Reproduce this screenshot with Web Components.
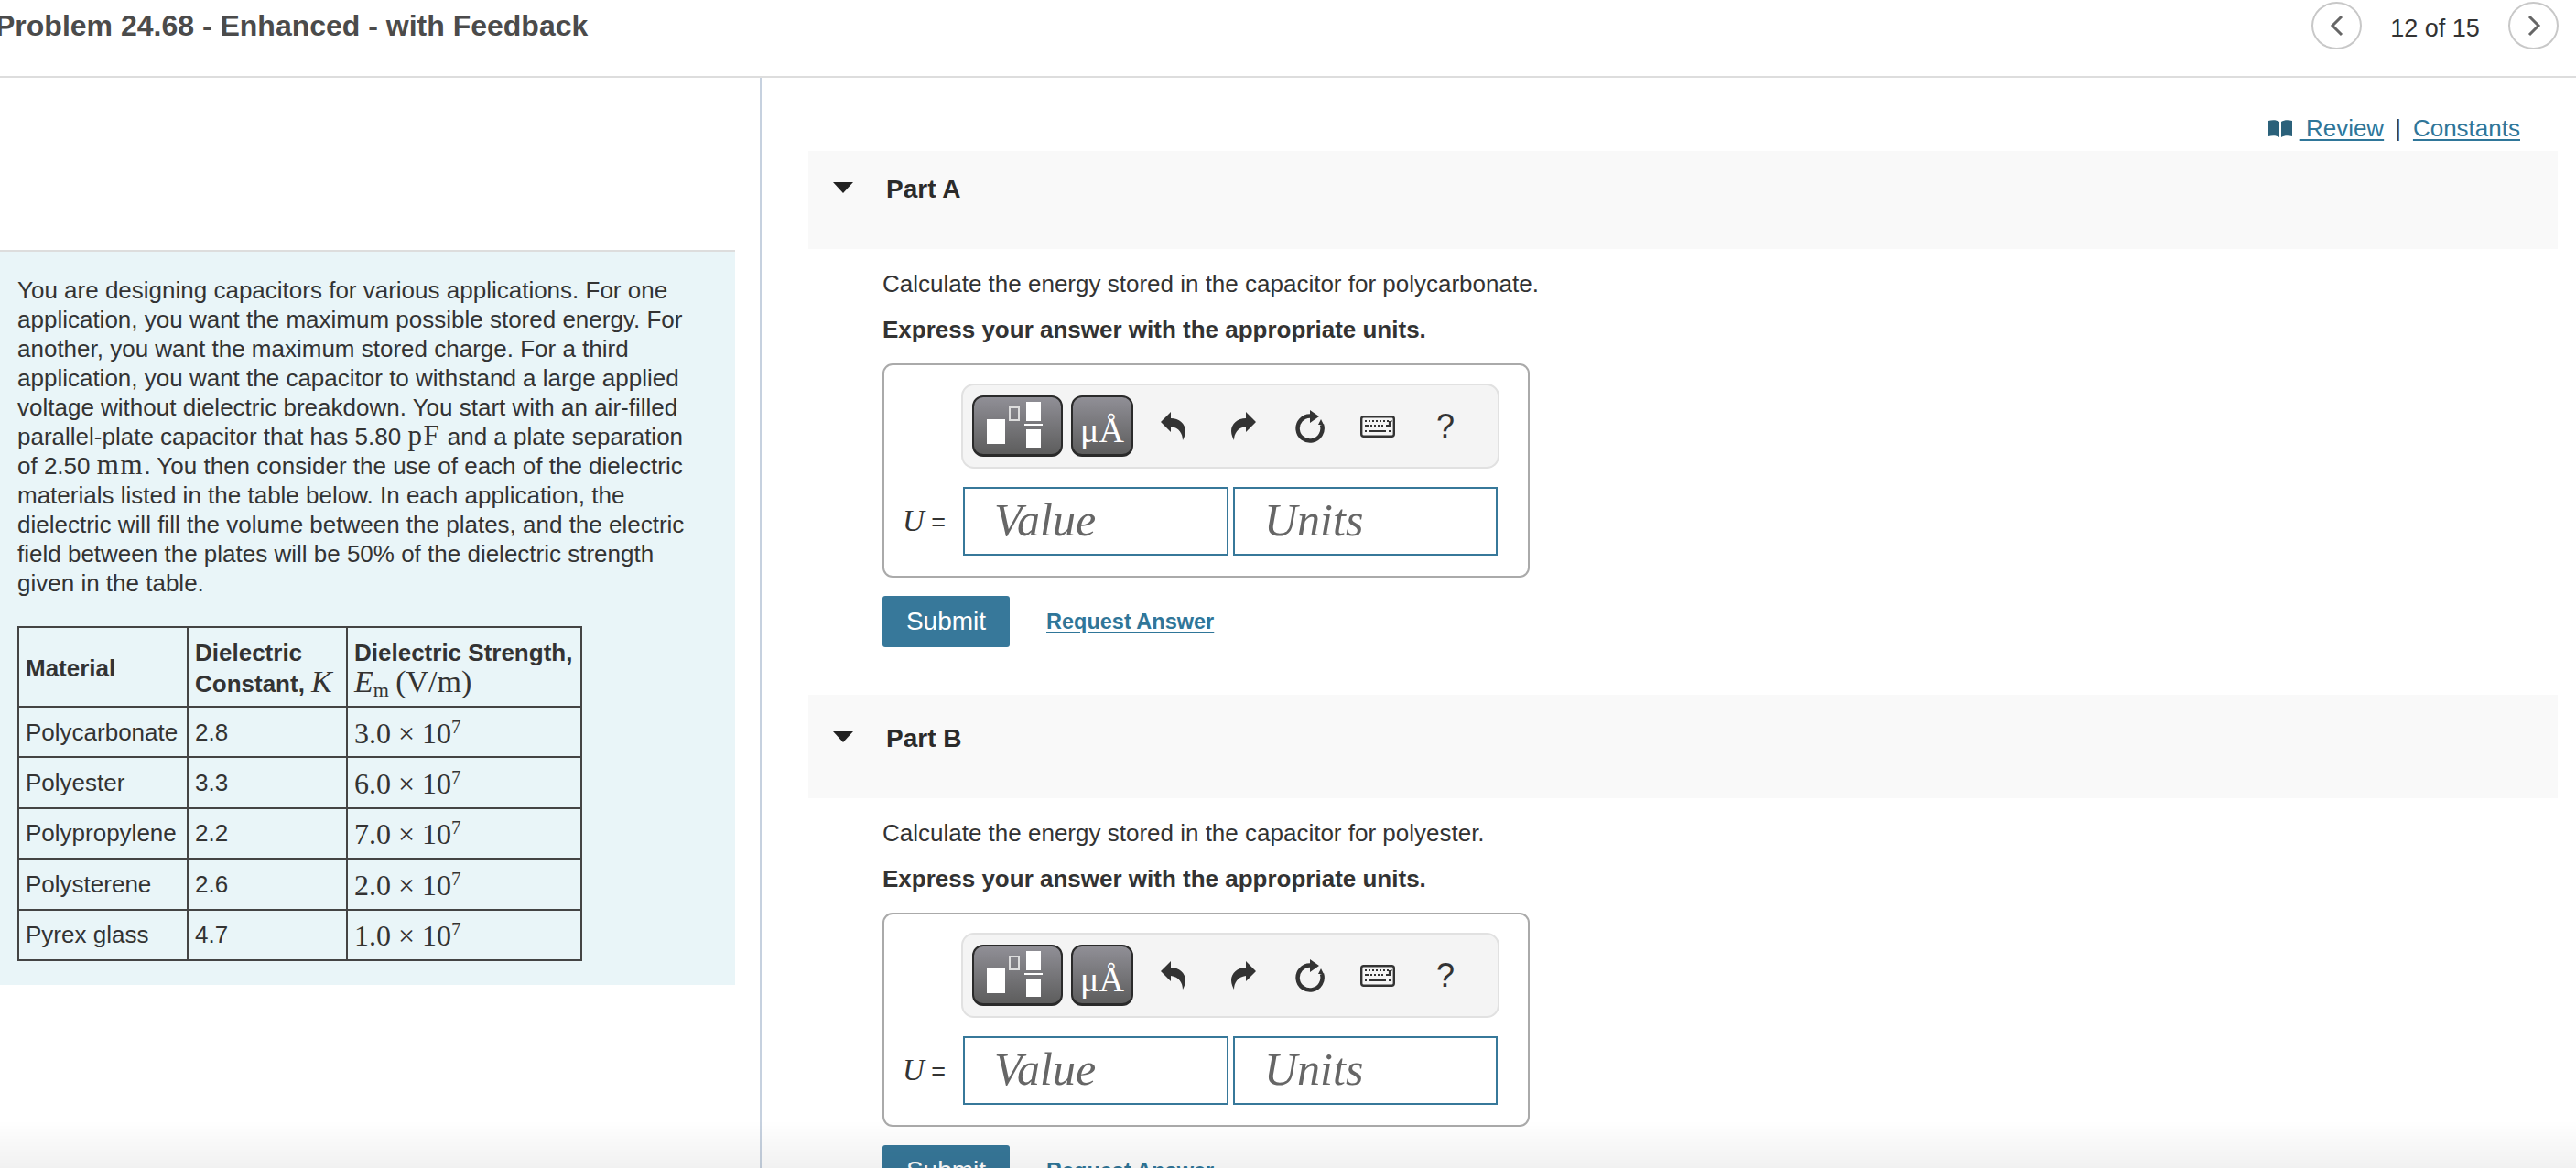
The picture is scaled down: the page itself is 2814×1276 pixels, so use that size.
<!DOCTYPE html>
<html>
<head>
<meta charset="utf-8">
<style>
  html, body { margin: 0; height: 1276px; overflow: hidden; background: #fff; }
  body { font: 26px/32px "Liberation Sans", Arial, sans-serif; color: #333; }
  .page { display: grid; grid-template-columns: 830px 2px 1fr; }
  .divider { background: #c6d1df; height: 1191px; }
  .right { padding-left: 51px; min-width: 0; }
  .shade { position: fixed; left: 0; right: 0; bottom: 0; height: 52px; pointer-events: none;
    background: linear-gradient(rgba(0,0,0,0), rgba(0,0,0,.055)); }
</style>
</head>
<body>
<mp-header number="12 of 15">Problem 24.68 - Enhanced - with Feedback</mp-header>
<div class="page">
  <mp-intro></mp-intro>
  <div class="divider"></div>
  <div class="right">
    <mp-review></mp-review>
    <mp-part name="Part A" material="polycarbonate"></mp-part>
    <mp-part name="Part B" material="polyester" tall></mp-part>
  </div>
</div>
<div class="shade"></div>

<script>
class MpHeader extends HTMLElement {
  constructor() {
    super();
    this.attachShadow({ mode: 'open' }).innerHTML = `
      <style>
        :host { display: flex; align-items: flex-start; justify-content: space-between; height: 83px; border-bottom: 2px solid #ddd; }
        h1 { margin: 10px 0 0 -5px; font: bold 32px/36px "Liberation Sans", Arial, sans-serif; color: #4b4b4b; white-space: nowrap; }
        nav { display: flex; align-items: center; margin: 2px 19px 0 0; }
        .arrow { width: 55px; height: 52px; box-sizing: border-box; border: 2px solid #c8c8c8; border-radius: 50%; display: flex; align-items: center; justify-content: center; }
        span { width: 160px; text-align: center; font-size: 27px; color: #333; margin-top: 5px; }
      </style>
      <h1><slot></slot></h1>
      <nav>
        <div class="arrow"><svg width="16" height="26" viewBox="0 0 16 26"><path d="M13 3 3 13l10 10" fill="none" stroke="#666" stroke-width="3"/></svg></div>
        <span>${this.getAttribute('number')}</span>
        <div class="arrow"><svg width="16" height="26" viewBox="0 0 16 26"><path d="M3 3l10 10L3 23" fill="none" stroke="#666" stroke-width="3"/></svg></div>
      </nav>`;
  }
}

class MpReview extends HTMLElement {
  constructor() {
    super();
    this.attachShadow({ mode: 'open' }).innerHTML = `
      <style>
        :host { display: flex; justify-content: flex-end; align-items: flex-start; height: 80px; padding: 39px 61px 0 0; box-sizing: border-box; font-size: 26px; line-height: 32px; }
        a { color: #2f7699; text-decoration: underline; text-underline-offset: 3px; white-space: pre; }
        svg { margin: 7px 8px 0 0; }
        i { font-style: normal; margin: 0 13px 0 12px; color: #444; }
      </style>
      <svg width="26" height="19" viewBox="0 0 26 19"><path d="M0 1c4-1 9-1 12 1v17c-3-2-8-2-12-1zM26 1c-4-1-9-1-12 1v17c3-2 8-2 12-1z" fill="#2b617a"/></svg>
      <a href="#"> Review</a><i>|</i><a href="#">Constants</a>`;
  }
}

const ROWS = [
  ['Polycarbonate', '2.8', '3.0'],
  ['Polyester', '3.3', '6.0'],
  ['Polypropylene', '2.2', '7.0'],
  ['Polysterene', '2.6', '2.0'],
  ['Pyrex glass', '4.7', '1.0']
];

class MpIntro extends HTMLElement {
  constructor() {
    super();
    const rows = ROWS.map(r => `<tr><td>${r[0]}</td><td>${r[1]}</td><td class="m">${r[2]} × 10<sup>7</sup></td></tr>`).join('');
    this.attachShadow({ mode: 'open' }).innerHTML = `
      <style>
        :host { display: block; padding-top: 188px; }
        .panel { width: 803px; box-sizing: border-box; height: 803px; border-top: 2px solid #ddd; background: #e9f5f8; padding: 26px 0 0 19px; }
        p { margin: 0; width: 735px; font-size: 26px; line-height: 32px; color: #333; }
        p .m { font-size: 31px; line-height: 0; letter-spacing: 1.700px; }
        .m { font-family: "Liberation Serif", "Times New Roman", serif; }
        table { margin-top: 31px; border-collapse: collapse; table-layout: fixed; width: 615px; border: 2px solid #444; font-size: 26px; line-height: 32px; }
        td, th { border: 2px solid #444; padding: 0 0 0 7px; text-align: left; white-space: nowrap; height: 55.400px; box-sizing: border-box; }
        thead th { height: 87px; padding-top: 2px; }
        td.m { font-size: 32px; padding-top: 2px; }
        sup { font-size: 21px; line-height: 0; vertical-align: 11px; }
        sub { font-size: 22px; line-height: 0; vertical-align: -5px; font-weight: normal; }
        em { font-family: "Liberation Serif", serif; font-weight: normal; font-size: 34px; }
        .s { font-family: "Liberation Serif", serif; font-size: 34px; font-weight: normal; }
      </style>
      <div class="panel">
        <p>You are designing capacitors for various applications. For one application, you want the maximum possible stored energy. For another, you want the maximum stored charge. For a third application, you want the capacitor to withstand a large applied voltage without dielectric breakdown. You start with an air-filled parallel-plate capacitor that has 5.80 <span class="m">pF</span> and a plate separation of 2.50 <span class="m">mm</span>. You then consider the use of each of the dielectric materials listed in the table below. In each application, the dielectric will fill the volume between the plates, and the electric field between the plates will be 50% of the dielectric strength given in the table.</p>
        <table>
          <colgroup><col style="width:185px"><col style="width:174px"><col style="width:256px"></colgroup>
          <thead><tr><th>Material</th><th>Dielectric<br>Constant, <em>K</em></th><th>Dielectric Strength,<br><em>E</em><sub class="m">m</sub> <span class="s">(V/m)</span></th></tr></thead>
          <tbody>${rows}</tbody>
        </table>
      </div>`;
  }
}

const UNDO = 'M0 11 11 0v7c9 0 16 6 16 14 0 4-2 8-3 10 0-7-4-14-13-15v6z';

class MpToolbar extends HTMLElement {
  constructor() {
    super();
    this.attachShadow({ mode: 'open' }).innerHTML = `
      <style>
        :host { display: flex; align-items: center; box-sizing: border-box; width: 588px; height: 93px; margin-left: 84px; padding-left: 10px; background: #f4f4f4; border: 2px solid #e1e1e1; border-radius: 14px; }
        .btn { box-sizing: border-box; height: 67px; border: 2px solid #2a2a2a; border-bottom-width: 3px; border-radius: 12px; background: linear-gradient(#908f96, #5d5d5d); }
        .tpl { width: 99px; display: block; }
        .unit { width: 68px; margin-left: 9px; color: #fff; font: 38px/72px "Liberation Serif", serif; text-align: center; white-space: nowrap; }
        svg { flex: none; }
        .q { width: 16px; margin-left: 45px; font: 36px/40px "Liberation Sans", sans-serif; color: #333; }
      </style>
      <div class="btn tpl"><svg width="95" height="62" viewBox="0 0 95 62" style="display:block">
        <path d="M14 24h20v27H14zM57 5h16v21H57zM55 29h20v2H55zM57 35h16v20H57z" fill="#fff"/>
        <rect x="39" y="11" width="10" height="14" fill="none" stroke="#ddd" stroke-width="2"/>
      </svg></div>
      <div class="btn unit">μÅ</div>
      <svg style="margin-left:30px" width="27" height="31" viewBox="0 0 27 31"><path d="${UNDO}" fill="#333"/></svg>
      <svg style="margin-left:50px" width="27" height="31" viewBox="0 0 27 31"><path d="${UNDO}" fill="#333" transform="matrix(-1 0 0 1 27 0)"/></svg>
      <svg style="margin-left:43px" width="32" height="36" viewBox="0 0 32 36"><path d="M16 6.500a13.500 13.500 0 1 0 13 9.500" fill="none" stroke="#333" stroke-width="4.500"/><path d="M16 0l10 7-10 7zM28 10l3 6h-6z" fill="#333"/></svg>
      <svg style="margin-left:39px" width="38" height="24" viewBox="0 0 38 24">
        <rect x="1.200" y="1.200" width="35.600" height="21.600" rx="2.500" fill="none" stroke="#333" stroke-width="2.400"/>
        <path d="M5 6h2M9 6h2M13 6h2M17 6h2M21 6h2M25 6h2M29 6h2M33 6h1.500M5 11h4M11 11h2M15 11h2M19 11h2M23 11h2M28 11h5M32 6v5M5 17h2M10 17h18M31 17h2" stroke="#333" stroke-width="2.200" fill="none"/>
      </svg>
      <div class="q">?</div>`;
  }
}

class MpAnswer extends HTMLElement {
  constructor() {
    super();
    this.attachShadow({ mode: 'open' }).innerHTML = `
      <style>
        :host { display: block; box-sizing: border-box; width: 707px; height: 234px; padding-top: 20px; border: 2px solid #aaa; border-radius: 11px; }
        .row { display: flex; margin-top: 20px; align-items: center; }
        label { width: 86px; box-sizing: border-box; padding-left: 20px; white-space: nowrap; font-size: 27px; color: #333; }
        label i { font: italic 33px "Liberation Serif", serif; }
        .inp { box-sizing: border-box; height: 75px; border: 2px solid #37789a; padding-left: 32px; font: italic 50px/68px "Liberation Serif", serif; color: #666; }
      </style>
      <mp-toolbar></mp-toolbar>
      <div class="row">
        <label><i>U</i> =</label>
        <div class="inp" style="width:290px">Value</div>
        <div class="inp" style="width:289px;margin-left:5px">Units</div>
      </div>`;
  }
}

class MpPart extends HTMLElement {
  constructor() {
    super();
    this.attachShadow({ mode: 'open' }).innerHTML = `
      <style>
        :host { display: block; margin: 0 20px 52px 0; }
        header { display: flex; align-items: flex-start; height: 107px; padding: 25px 0 0 27px; box-sizing: border-box; background: #f9f9f9; }
        :host([tall]) header { height: 113px; padding-top: 31px; }
        svg { margin: 9px 36px 0 0; }
        h2 { margin: 0; font: bold 28px/34px "Liberation Sans", Arial, sans-serif; color: #2b2b2b; }
        .body { padding-left: 81px; }
        p { margin: 0; font-size: 26px; line-height: 32px; color: #333; }
        .q { padding-top: 22px; }
        .x { margin: 18px 0 21px; font-weight: bold; }
        .acts { display: flex; align-items: center; margin-top: 20px; }
        button { width: 139px; height: 56px; border: 0; border-radius: 3px; background: #37789a; color: #fff; font: 28px "Liberation Sans", Arial, sans-serif; padding: 0; }
        a { margin-left: 40px; color: #2f7699; font-weight: bold; font-size: 23.500px; text-underline-offset: 3px; }
      </style>
      <header>
        <svg width="22" height="12" viewBox="0 0 22 12"><path d="M0 0h22L11 12z" fill="#222"/></svg>
        <h2>${this.getAttribute('name')}</h2>
      </header>
      <div class="body">
        <p class="q">Calculate the energy stored in the capacitor for ${this.getAttribute('material')}.</p>
        <p class="x">Express your answer with the appropriate units.</p>
        <mp-answer></mp-answer>
        <div class="acts"><button>Submit</button><a href="#">Request Answer</a></div>
      </div>`;
  }
}

customElements.define('mp-header', MpHeader);
customElements.define('mp-review', MpReview);
customElements.define('mp-intro', MpIntro);
customElements.define('mp-toolbar', MpToolbar);
customElements.define('mp-answer', MpAnswer);
customElements.define('mp-part', MpPart);
</script>
</body>
</html>
